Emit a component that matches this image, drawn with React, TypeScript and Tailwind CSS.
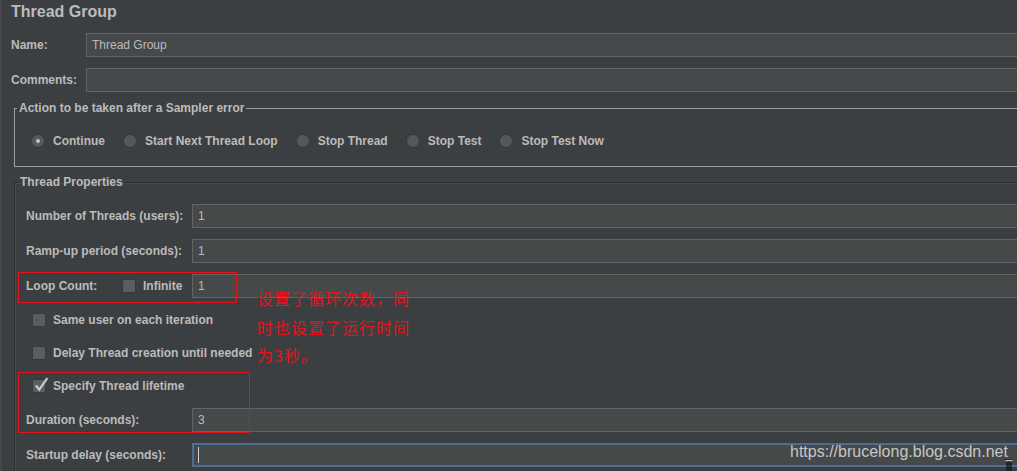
import React from 'react';

// ==========================================
// JMeter Thread Group panel (Darcula)
// ==========================================

const inputCls =
  'h-[24px] flex-1 flex items-center px-[5px] bg-[#45494a] border border-[#646464] text-[12px] font-normal text-[#bbbbbb]';

function Radio({ label, checked = false }: { label: string; checked?: boolean }) {
  return (
    <div className="flex items-center gap-[8px]">
      <span className="w-[14px] h-[14px] rounded-full bg-[#55585a] border border-[#35373a] flex items-center justify-center">
        {checked && <span className="w-[4px] h-[4px] rounded-full bg-[#c4c4c4]" />}
      </span>
      <span className="font-bold">{label}</span>
    </div>
  );
}

function Checkbox({ checked = false }: { checked?: boolean }) {
  return (
    <span className="relative w-[14px] h-[14px] rounded-[2px] bg-[#5a5d5f] border border-[#37393b] shrink-0">
      {checked && (
        <svg viewBox="0 0 14 14" className="absolute left-[0px] top-[-3px] w-[16px] h-[16px]">
          <path d="M2.5 7.5 L5.5 11 L12.5 1" fill="none" stroke="#c8c8c8" strokeWidth="2" />
        </svg>
      )}
    </span>
  );
}

function FieldRow({ label, value, className = '' }: { label: string; value: string; className?: string }) {
  return (
    <div className={`flex items-center ${className}`}>
      <span className="w-[166px] font-bold">{label}</span>
      <div className={inputCls}>{value}</div>
    </div>
  );
}

function CheckRow({ label, checked = false, className = '' }: { label: string; checked?: boolean; className?: string }) {
  return (
    <div className={`flex items-center h-[22px] pl-[6px] gap-[7px] ${className}`}>
      <Checkbox checked={checked} />
      <span className="font-bold">{label}</span>
    </div>
  );
}

export default function App() {
  return (
    <div className="relative w-[1017px] h-[471px] overflow-hidden bg-[#3c3f41] border-l-2 border-[#46494b] text-[#bbbbbb] text-[12px] font-['Liberation_Sans',Arial,sans-serif]">
      <div className="w-[1100px] pl-[9px]">
        {/* Title */}
        <h1 className="text-[16px] font-bold leading-[20px] pt-[2px]">Thread Group</h1>

        {/* Name / Comments */}
        <div className="flex items-center mt-[11px]">
          <span className="w-[75px] font-bold">Name:</span>
          <div className={inputCls}>Thread Group</div>
        </div>
        <div className="flex items-center mt-[11px]">
          <span className="w-[75px] font-bold">Comments:</span>
          <div className={inputCls}></div>
        </div>

        {/* Sampler error action */}
        <fieldset className="ml-[3px] mt-[8px] border border-[#9c9ea0]">
          <legend className="ml-[2px] px-[2px] font-bold leading-[16px]">Action to be taken after a Sampler error</legend>
          <div className="flex items-center h-[20px] gap-[18px] pl-[16px] mt-[15px] mb-[15px]">
            <Radio label="Continue" checked />
            <Radio label="Start Next Thread Loop" />
            <Radio label="Stop Thread" />
            <Radio label="Stop Test" />
            <Radio label="Stop Test Now" />
          </div>
        </fieldset>

        {/* Thread properties */}
        <fieldset className="ml-[3px] mt-[7px] h-[320px] border border-[#2b2d2f] shadow-[inset_1px_1px_0_#47494b]">
          <legend className="ml-[3px] px-[2px] font-bold leading-[16px]">Thread Properties</legend>
          <div className="pl-[11px] pt-[14px]">
            <FieldRow label="Number of Threads (users):" value="1" />
            <FieldRow label="Ramp-up period (seconds):" value="1" className="mt-[11px]" />
            <div className="flex items-center mt-[11px]">
              <div className="w-[166px] flex items-center">
                <span className="w-[96px] font-bold">Loop Count:</span>
                <Checkbox />
                <span className="ml-[7px] font-bold">Infinite</span>
              </div>
              <div className={inputCls}>1</div>
            </div>
            <CheckRow label="Same user on each iteration" className="mt-[11px]" />
            <CheckRow label="Delay Thread creation until needed" className="mt-[11px]" />
            <CheckRow label="Specify Thread lifetime" checked className="mt-[11px]" />
            <FieldRow label="Duration (seconds):" value="3" className="mt-[11px]" />
            <div className="flex items-center mt-[11px]">
              <span className="w-[166px] font-bold">Startup delay (seconds):</span>
              <div className="h-[24px] flex-1 flex items-center px-[4px] bg-[#45494a] border-2 border-[#4a6e96]">
                <span className="w-px h-[16px] bg-[#d0d0d0]" />
              </div>
            </div>
          </div>
        </fieldset>
      </div>

      {/* Red annotation boxes */}
      <div className="absolute left-[16px] top-[272px] w-[219px] h-[31px] border border-[#e3141c]" />
      <div className="absolute left-[16px] top-[372px] w-[232px] h-[61px] border border-[#e3141c]" />

      {/* Annotation text */}
      <div className="absolute left-[255px] top-[284px] text-[16px] leading-[28.5px] tracking-[1px] text-[#e3141c] font-['Noto_Sans_CJK_SC',sans-serif]">
        <p>设置了循环次数，同</p>
        <p>时也设置了运行时间</p>
        <p>为3秒。</p>
      </div>

      {/* Watermark */}
      <div className="absolute left-[788px] top-[442px] text-[16px] leading-[20px] text-[#c4c4c4] font-['Liberation_Sans',Arial,sans-serif] [text-shadow:0_0_1px_#555]">
        https://brucelong.blog.csdn.net
      </div>

      {/* Mouse I-beam cursor */}
      <svg viewBox="0 0 10 12" className="absolute left-[1002px] top-[459px] w-[10px] h-[12px]">
        <path d="M1 1 H9 M5 1 V12 M3 3 V12 M7 3 V12" fill="none" stroke="#111" strokeWidth="1.2" />
        <path d="M1.5 1.6 H8.5" stroke="#fff" strokeWidth="0.8" />
      </svg>
    </div>
  );
}
